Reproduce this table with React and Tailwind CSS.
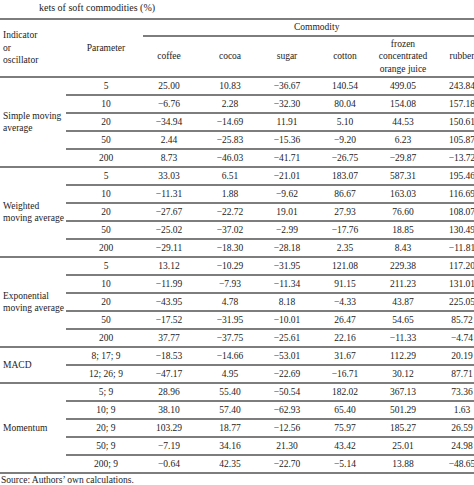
import React from 'react';

// Returns on soft commodities by technical indicator (%)
const groups = [
  {
    name: ['Simple moving', 'average'],
    rows: [
      ['5', '25.00', '10.83', '−36.67', '140.54', '499.05', '243.84'],
      ['10', '−6.76', '2.28', '−32.30', '80.04', '154.08', '157.18'],
      ['20', '−34.94', '−14.69', '11.91', '5.10', '44.53', '150.61'],
      ['50', '2.44', '−25.83', '−15.36', '−9.20', '6.23', '105.87'],
      ['200', '8.73', '−46.03', '−41.71', '−26.75', '−29.87', '−13.72'],
    ],
  },
  {
    name: ['Weighted', 'moving average'],
    rows: [
      ['5', '33.03', '6.51', '−21.01', '183.07', '587.31', '195.46'],
      ['10', '−11.31', '1.88', '−9.62', '86.67', '163.03', '116.69'],
      ['20', '−27.67', '−22.72', '19.01', '27.93', '76.60', '108.07'],
      ['50', '−25.02', '−37.02', '−2.99', '−17.76', '18.85', '130.49'],
      ['200', '−29.11', '−18.30', '−28.18', '2.35', '8.43', '−11.81'],
    ],
  },
  {
    name: ['Exponential', 'moving average'],
    rows: [
      ['5', '13.12', '−10.29', '−31.95', '121.08', '229.38', '117.20'],
      ['10', '−11.99', '−7.93', '−11.34', '91.15', '211.23', '131.01'],
      ['20', '−43.95', '4.78', '8.18', '−4.33', '43.87', '225.05'],
      ['50', '−17.52', '−31.95', '−10.01', '26.47', '54.65', '85.72'],
      ['200', '37.77', '−37.75', '−25.61', '22.16', '−11.33', '−4.74'],
    ],
  },
  {
    name: ['MACD'],
    rows: [
      ['8; 17; 9', '−18.53', '−14.66', '−53.01', '31.67', '112.29', '20.19'],
      ['12; 26; 9', '−47.17', '4.95', '−22.69', '−16.71', '30.12', '87.71'],
    ],
  },
  {
    name: ['Momentum'],
    rows: [
      ['5; 9', '28.96', '55.40', '−50.54', '182.02', '367.13', '73.36'],
      ['10; 9', '38.10', '57.40', '−62.93', '65.40', '501.29', '1.63'],
      ['20; 9', '103.29', '18.77', '−12.56', '75.97', '185.27', '26.59'],
      ['50; 9', '−7.19', '34.16', '21.30', '43.42', '25.01', '24.98'],
      ['200; 9', '−0.64', '42.35', '−22.70', '−5.14', '13.88', '−48.65'],
    ],
  },
];

function Cell({ children }) {
  return <div className="flex items-center justify-center whitespace-nowrap">{children}</div>;
}

export default function App() {
  return (
    <div className="w-[474px] h-[485px] overflow-hidden bg-white text-[#1c1c1c] text-[9.5px] font-['Liberation_Serif','Times_New_Roman',serif]">
      <div className="h-[18px] pl-[39px] text-[10px] leading-[16px]">kets of soft commodities (%)</div>

      <div className="w-[502px] border-t-2 border-[#7d7d7d]">
        {/* header */}
        <div className="flex border-b-2 border-[#7d7d7d] leading-[12.5px]">
          <div className="w-[66px] h-[56px] pl-[3px] flex items-center">
            <div>Indicator<br />or<br />oscillator</div>
          </div>
          <div className="w-[80px] flex items-center justify-center">Parameter</div>
          <div className="flex flex-col flex-1">
            <div className="h-[17px] border-b-2 border-[#7d7d7d] -ml-[3px] pl-[151px] flex items-center">Commodity</div>
            <div className="grid grid-cols-[46px_76px_38px_78px_38px_80px] h-[39px]">
              <Cell>coffee</Cell>
              <Cell>cocoa</Cell>
              <Cell>sugar</Cell>
              <Cell>cotton</Cell>
              <div className="flex items-center justify-center text-center whitespace-nowrap">
                <div>frozen<br />concentrated<br />orange juice</div>
              </div>
              <Cell>rubber</Cell>
            </div>
          </div>
        </div>

        {groups.map((g) => (
          <div key={g.name.join(' ')} className="flex border-b-2 border-[#7d7d7d]">
            <div className="w-[66px] pl-[3px] flex items-center leading-[12.5px]">
              <div>
                {g.name.map((n, i) => (
                  <div key={i}>{n}</div>
                ))}
              </div>
            </div>
            <div className="flex-1 flex flex-col">
              {g.rows.map((r) => (
                <div
                  key={r[0]}
                  className="grid grid-cols-[80px_46px_76px_38px_78px_38px_80px] h-[18px] border-b-2 border-[#7d7d7d] last:h-[16px] last:border-b-0"
                >
                  {r.map((v, i) => (
                    <Cell key={i}>{v}</Cell>
                  ))}
                </div>
              ))}
            </div>
          </div>
        ))}
      </div>

      <div className="pl-[1px] leading-[12px]">Source: Authors’ own calculations.</div>
    </div>
  );
}
